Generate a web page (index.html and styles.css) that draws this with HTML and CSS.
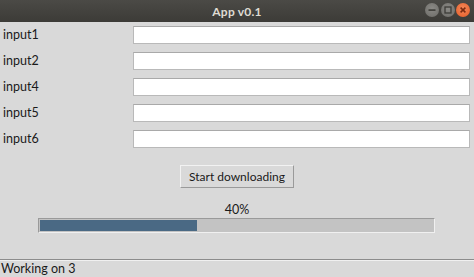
FILE: index.html
```html
<!DOCTYPE html>
<html>
<head>
<meta charset="utf-8">
<title>App v0.1</title>
<link rel="stylesheet" href="styles.css">
</head>
<body>
<div class="window">
  <div class="titlebar">
    <span class="title">App v0.1</span>
    <div class="controls">
      <span class="ctl ctl-min"><svg width="14" height="14" viewBox="0 0 14 14"><rect x="3.5" y="6.3" width="7" height="1.6" fill="#3d3c38"/></svg></span>
      <span class="ctl ctl-max"><svg width="14" height="14" viewBox="0 0 14 14"><rect x="4" y="4" width="6" height="6" fill="none" stroke="#3d3c38" stroke-width="1.3"/></svg></span>
      <span class="ctl ctl-close"><svg width="14" height="14" viewBox="0 0 14 14"><path d="M4.6 4.6 L9.4 9.4 M9.4 4.6 L4.6 9.4" stroke="#7a2a10" stroke-width="1.5"/></svg></span>
    </div>
  </div>
  <div class="content">
    <div class="form">
      <label class="lbl">input1</label><div class="entry"></div>
      <label class="lbl">input2</label><div class="entry"></div>
      <label class="lbl">input4</label><div class="entry"></div>
      <label class="lbl">input5</label><div class="entry"></div>
      <label class="lbl">input6</label><div class="entry"></div>
    </div>
    <div class="action">
      <button class="btn">Start downloading</button>
    </div>
    <div class="percent">40%</div>
    <div class="progress-row">
      <div class="trough"><div class="fill" style="width:40%"></div></div>
    </div>
  </div>
  <div class="status">Working on 3</div>
</div>
</body>
</html>
```
FILE: styles.css
```css
html, body {
  margin: 0;
  padding: 0;
}
body {
  width: 474px;
  height: 277px;
  overflow: hidden;
  background: #d9d9d9;
  font-family: Lato, "DejaVu Sans", sans-serif;
  font-size: 12.5px;
  color: #1a1a1a;
}
.window {
  display: flex;
  flex-direction: column;
  height: 277px;
}
.titlebar {
  position: relative;
  height: 22px;
  flex: none;
  background: linear-gradient(#4b4a46, #3c3b37);
  display: flex;
  align-items: center;
  justify-content: center;
}
.title {
  color: #dfdbd2;
  font-weight: bold;
  font-size: 12px;
  letter-spacing: 0.2px;
}
.controls {
  position: absolute;
  right: 4px;
  top: 3px;
  display: flex;
  gap: 1.5px;
}
.ctl {
  width: 14px;
  height: 14px;
  border-radius: 50%;
  display: flex;
}
.ctl-min, .ctl-max {
  background: radial-gradient(circle at 50% 40%, #8b8a86, #6c6b67);
}
.ctl-close {
  background: radial-gradient(circle at 50% 40%, #f4895a, #e55b26);
}
.content {
  flex: 1;
}
.form {
  display: grid;
  grid-template-columns: 133px 337px;
  grid-auto-rows: 18px;
  row-gap: 8px;
  padding-top: 4px;
  align-items: center;
}
.lbl {
  padding-left: 3px;
  line-height: 18px;
}
.entry {
  box-sizing: border-box;
  height: 18px;
  background: #fff;
  border: 1px solid #b9b9b9;
  border-top-color: #a9a9a9;
}
.action {
  display: flex;
  justify-content: center;
  padding-top: 17px;
}
.btn {
  box-sizing: border-box;
  width: 114px;
  height: 23px;
  font-family: inherit;
  font-size: 12px;
  color: #1a1a1a;
  background: #d9d9d9;
  border: 1px solid;
  border-color: #f2f2f2 #9a9a9a #9a9a9a #f2f2f2;
  padding: 0;
}
.percent {
  text-align: center;
  margin-top: 13px;
  line-height: 17px;
}
.progress-row {
  padding-left: 38px;
}
.trough {
  box-sizing: border-box;
  width: 397px;
  height: 15px;
  background: #c3c3c3;
  border: 1px solid;
  border-color: #9a9a9a #f0f0f0 #f0f0f0 #9a9a9a;
  padding: 1px;
}
.fill {
  height: 100%;
  background: #4a6984;
}
.status {
  flex: none;
  height: 17px;
  border-top: 1px solid #8c8c8c;
  box-shadow: inset 0 1px 0 #f0f0f0;
  padding-left: 1px;
  line-height: 18px;
}
```
